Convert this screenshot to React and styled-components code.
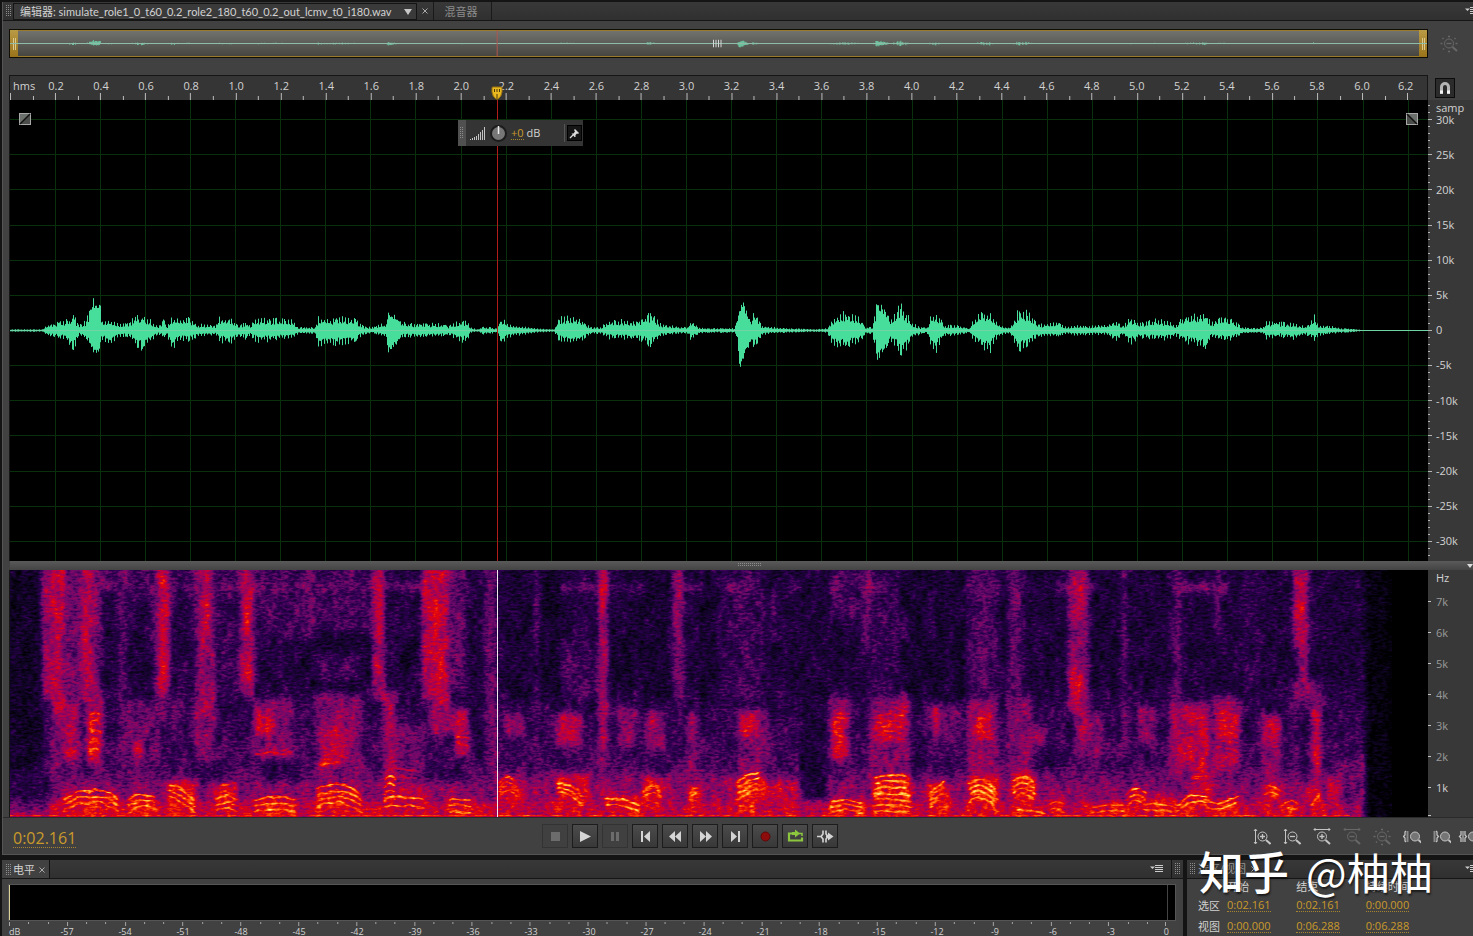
import React from 'react';
import styled, { createGlobalStyle } from 'styled-components';

const DURATION = 6.288;
const WIDTH = 1418;
const WAVE_HEIGHT = 461;
const CURSOR = 2.161;

const timeX = (t) => (t / DURATION) * WIDTH;

// [x, peak above the axis, peak below the axis]
const ENVELOPE = [
  [10, 1, 1], [42, 1, 1], [46, 5, 5], [58, 8, 7], [66, 10, 8], [69, 12, 18], [74, 17, 20], [76, 8, 10],
  [79, 5, 4], [86, 10, 10], [89, 20, 13], [93, 30, 20], [97, 28, 22], [100, 24, 15], [102, 9, 9], [109, 11, 17],
  [118, 7, 6], [130, 8, 6], [134, 15, 13], [141, 14, 19], [150, 10, 12], [153, 8, 8], [157, 4, 4], [163, 11, 6],
  [167, 4, 5], [172, 14, 20], [178, 12, 10], [189, 13, 11], [195, 6, 7], [207, 6, 5], [215, 4, 4], [219, 14, 11],
  [231, 12, 13], [236, 6, 6], [245, 7, 8], [250, 5, 5], [257, 13, 12], [283, 11, 8], [293, 10, 7], [298, 3, 3],
  [315, 3, 3], [318, 13, 16], [330, 12, 14], [352, 14, 13], [363, 4, 4], [373, 3, 2], [379, 6, 5], [385, 6, 6],
  [388, 18, 21], [394, 14, 15], [401, 8, 7], [415, 6, 6], [439, 7, 6], [448, 4, 4], [460, 10, 11], [467, 9, 11],
  [470, 3, 2], [477, 1, 1], [484, 4, 4], [495, 2, 2], [498, 5, 3], [502, 13, 17], [507, 6, 7], [524, 4, 4],
  [536, 2, 2], [554, 1, 1], [558, 13, 9], [569, 15, 13], [578, 14, 12], [590, 3, 3], [600, 3, 3], [609, 10, 8],
  [618, 11, 8], [635, 9, 9], [650, 17, 15], [661, 6, 5], [675, 4, 3], [687, 3, 3], [691, 11, 10], [698, 3, 3],
  [708, 2, 2], [722, 2, 2], [734, 2, 2], [737, 10, 8], [739, 24, 35], [743, 26, 29], [747, 18, 18], [750, 9, 14],
  [754, 20, 22], [757, 14, 12], [761, 5, 5], [768, 4, 3], [787, 2, 2], [815, 1, 1], [827, 2, 2], [832, 11, 14],
  [837, 15, 20], [842, 19, 18], [854, 14, 15], [859, 13, 13], [865, 3, 3], [872, 3, 3], [874, 14, 14], [877, 28, 28],
  [882, 22, 21], [889, 13, 12], [895, 18, 17], [900, 28, 23], [906, 17, 18], [912, 7, 8], [920, 3, 3], [927, 3, 3],
  [930, 13, 15], [935, 20, 23], [940, 13, 11], [943, 5, 5], [957, 5, 5], [969, 2, 2], [974, 13, 12], [983, 21, 18],
  [989, 18, 24], [995, 10, 9], [1002, 4, 4], [1010, 3, 3], [1014, 12, 13], [1018, 20, 23], [1030, 18, 15], [1033, 10, 8],
  [1040, 6, 6], [1057, 8, 6], [1066, 3, 3], [1076, 5, 5], [1090, 4, 4], [1097, 6, 4], [1107, 5, 4], [1115, 8, 10],
  [1123, 4, 4], [1130, 14, 14], [1138, 7, 7], [1157, 11, 9], [1168, 9, 9], [1175, 5, 5], [1183, 14, 10], [1199, 18, 18],
  [1208, 14, 16], [1211, 7, 6], [1218, 14, 9], [1232, 11, 9], [1242, 3, 3], [1256, 2, 2], [1263, 3, 3], [1266, 9, 9],
  [1277, 8, 5], [1292, 7, 9], [1306, 4, 4], [1314, 15, 11], [1318, 5, 5], [1332, 4, 3], [1341, 2, 2], [1356, 1, 1],
  [1366, 0, 0], [1428, 0, 0],
];

const noise = (n) => {
  const v = Math.sin(n * 127.1) * 43758.5453;
  return v - Math.floor(v);
};

const wavePath = (centre, scale, floor = 0) => {
  let d = '';
  let k = 0;
  for (let x = 10; x < 1428; x += 1) {
    while (k < ENVELOPE.length - 2 && ENVELOPE[k + 1][0] <= x) k += 1;
    const [x0, u0, d0] = ENVELOPE[k];
    const [x1, u1, d1] = ENVELOPE[k + 1];
    const f = (x - x0) / (x1 - x0);
    const loud = (x0 > 736 && x0 < 748) || (x0 > 86 && x0 < 100) || (x0 > 874 && x0 < 884) || (x0 > 386 && x0 < 395);
    const pulse = loud || x % 3 === 0 || noise(x + 7) > 0.8 ? 1 : 0.6;
    const up = ((u0 + (u1 - u0) * f) * pulse * (0.74 + 0.38 * noise(x)) - floor) * scale;
    const down = ((d0 + (d1 - d0) * f) * pulse * (0.74 + 0.38 * noise(x + 0.5)) - floor) * scale;
    if (up <= 0 && down <= 0) continue;
    d += `M${x - 9.5} ${(centre - up - 0.2).toFixed(1)}V${(centre + down + 0.2).toFixed(1)}`;
  }
  return d;
};

// energy of the spectrogram: [x0, x1, y0, y1, level]
const ENERGY = [
  [0, 1440, 560, 700, 0.19], [0, 1440, 690, 712, 0.225], [0, 1440, 712, 740, 0.255], [0, 1440, 740, 770, 0.28],
  [0, 1440, 770, 830, 0.34],
  [0, 42, 560, 770, 0.13], [0, 50, 770, 800, 0.22], [0, 50, 800, 830, 0.34],
  [42, 82, 560, 700, 0.36], [150, 260, 560, 700, 0.26], [100, 155, 560, 630, 0.29], [253, 372, 560, 640, 0.28],
  [640, 672, 570, 700, 0.16], [575, 598, 570, 700, 0.22], [720, 765, 570, 700, 0.25],
  [810, 828, 570, 790, 0.13], [828, 870, 570, 620, 0.29], [872, 900, 570, 700, 0.25], [900, 966, 570, 700, 0.16],
  [540, 560, 570, 700, 0.14], [316, 370, 630, 650, 0.16], [392, 422, 570, 690, 0.21], [470, 482, 570, 760, 0.2],
  [508, 534, 570, 700, 0.17], [700, 716, 570, 700, 0.16], [610, 640, 620, 690, 0.16], [316, 360, 655, 680, 0.27],
  [104, 118, 590, 625, 0.19], [135, 150, 600, 700, 0.18], [172, 192, 600, 690, 0.21], [262, 300, 640, 695, 0.2],
  [400, 420, 640, 670, 0.14], [450, 476, 660, 700, 0.19], [260, 310, 765, 785, 0.25], [190, 225, 765, 785, 0.26],
  [425, 470, 762, 790, 0.25], [910, 928, 735, 765, 0.2], [1040, 1068, 750, 770, 0.22], [1235, 1260, 725, 760, 0.26],
  [1088, 1120, 570, 690, 0.17], [1128, 1170, 570, 690, 0.18], [1325, 1366, 570, 690, 0.18],
  [50, 1366, 782, 830, 0.42], [62, 130, 583, 591, 0.4], [150, 360, 583, 591, 0.36], [370, 470, 583, 590, 0.42],
  [560, 580, 584, 591, 0.34], [580, 600, 584, 591, 0.4], [610, 645, 584, 591, 0.3], [670, 702, 584, 591, 0.38],
  [726, 752, 584, 591, 0.44], [790, 805, 583, 590, 0.36],
  [830, 845, 582, 591, 0.36], [863, 886, 582, 591, 0.4], [966, 1000, 582, 591, 0.4], [1060, 1098, 583, 591, 0.42],
  [1174, 1212, 583, 592, 0.4], [1214, 1230, 583, 592, 0.36],
  [42, 64, 560, 700, 0.48], [50, 63, 570, 620, 0.55], [50, 63, 660, 690, 0.54], [81, 100, 560, 700, 0.41],
  [82, 91, 560, 690, 0.53], [119, 127, 560, 760, 0.33], [156, 170, 560, 695, 0.45], [160, 168, 560, 688, 0.57],
  [195, 215, 560, 760, 0.42], [203, 212, 560, 635, 0.48], [203, 210, 700, 716, 0.57], [240, 254, 560, 695, 0.44],
  [243, 251, 575, 635, 0.55], [243, 252, 655, 684, 0.58], [307, 315, 560, 625, 0.39], [372, 385, 560, 700, 0.45],
  [376, 383, 560, 640, 0.55], [376, 382, 655, 670, 0.55], [422, 448, 560, 700, 0.52], [427, 444, 575, 650, 0.55],
  [433, 446, 650, 682, 0.56], [448, 466, 560, 690, 0.34], [484, 497, 560, 817, 0.34], [534, 540, 570, 760, 0.31],
  [560, 592, 640, 700, 0.28], [598, 608, 560, 770, 0.45], [600, 607, 575, 612, 0.55], [672, 684, 560, 700, 0.38],
  [674, 681, 575, 635, 0.46], [771, 775, 590, 645, 0.38], [740, 752, 560, 700, 0.29], [863, 871, 560, 655, 0.37],
  [902, 907, 610, 640, 0.4], [930, 934, 590, 640, 0.3], [967, 998, 560, 817, 0.3], [1008, 1022, 560, 817, 0.33],
  [1068, 1089, 560, 712, 0.42], [1072, 1084, 570, 630, 0.48], [1070, 1085, 674, 688, 0.57], [1072, 1081, 690, 712, 0.56],
  [1122, 1127, 560, 760, 0.37], [1172, 1181, 560, 700, 0.34], [1215, 1221, 560, 640, 0.35], [1240, 1262, 560, 690, 0.23],
  [1293, 1309, 560, 650, 0.47], [1297, 1306, 575, 640, 0.53], [1299, 1308, 650, 682, 0.5], [1290, 1325, 680, 710, 0.37],
  [52, 80, 700, 768, 0.4], [67, 77, 702, 745, 0.55], [52, 66, 700, 712, 0.57], [64, 77, 748, 756, 0.59],
  [86, 102, 695, 765, 0.53], [90, 98, 712, 756, 0.6], [118, 160, 700, 765, 0.35], [132, 143, 742, 755, 0.59],
  [160, 185, 700, 720, 0.38], [253, 296, 698, 758, 0.39], [255, 272, 708, 736, 0.57], [256, 290, 749, 756, 0.51],
  [316, 362, 695, 800, 0.42], [322, 346, 728, 766, 0.53], [318, 340, 761, 767, 0.57], [383, 396, 690, 800, 0.47],
  [396, 425, 725, 790, 0.37], [455, 470, 708, 757, 0.5], [436, 450, 694, 704, 0.55], [430, 455, 704, 735, 0.45],
  [503, 525, 715, 737, 0.43], [556, 582, 712, 745, 0.49], [560, 574, 718, 740, 0.56], [617, 636, 708, 748, 0.42],
  [646, 664, 710, 748, 0.43], [650, 655, 712, 726, 0.54], [687, 698, 715, 790, 0.43], [738, 768, 708, 790, 0.4],
  [740, 758, 712, 736, 0.56], [828, 850, 698, 762, 0.45], [833, 847, 714, 756, 0.57], [870, 910, 698, 800, 0.41],
  [876, 904, 712, 742, 0.54], [900, 908, 692, 712, 0.49], [925, 962, 705, 740, 0.37], [932, 940, 710, 735, 0.5],
  [968, 998, 700, 800, 0.44], [975, 992, 715, 738, 0.57], [1008, 1032, 698, 800, 0.41], [1018, 1046, 728, 745, 0.46],
  [1076, 1102, 712, 758, 0.43], [1075, 1086, 724, 733, 0.56], [1138, 1156, 706, 745, 0.42], [1170, 1210, 702, 775, 0.46],
  [1178, 1206, 714, 724, 0.55], [1176, 1208, 738, 764, 0.52], [1196, 1209, 720, 775, 0.54], [1213, 1240, 698, 775, 0.45],
  [1216, 1238, 714, 738, 0.57], [1216, 1238, 752, 762, 0.56], [1263, 1282, 714, 800, 0.43], [1265, 1278, 716, 744, 0.55],
  [1311, 1321, 710, 800, 0.45], [1314, 1320, 712, 770, 0.55], [1325, 1340, 775, 800, 0.5], [498, 812, 776, 800, 0.42],
  [50, 1345, 802, 830, 0.55], [0, 50, 811, 830, 0.5],
  [1340, 1368, 760, 806, 0.36], [1352, 1369, 803, 830, 0.44],
  [62, 118, 796, 817, 0.63], [127, 155, 796, 817, 0.62], [168, 196, 780, 817, 0.59], [215, 238, 786, 817, 0.59],
  [253, 296, 800, 817, 0.63], [316, 360, 790, 817, 0.61], [383, 424, 785, 817, 0.54], [448, 470, 800, 817, 0.61],
  [498, 528, 782, 802, 0.6], [556, 590, 775, 817, 0.6], [605, 662, 795, 817, 0.61], [643, 664, 778, 800, 0.6],
  [688, 705, 785, 817, 0.59], [735, 765, 778, 817, 0.64], [765, 800, 782, 817, 0.53], [828, 864, 800, 817, 0.63],
  [872, 912, 776, 817, 0.61], [928, 950, 782, 817, 0.61], [968, 1000, 774, 817, 0.62], [1012, 1036, 773, 817, 0.62],
  [1050, 1064, 800, 817, 0.6], [1088, 1130, 805, 817, 0.61], [1130, 1175, 792, 817, 0.58], [1178, 1240, 800, 817, 0.63],
  [1192, 1212, 768, 800, 0.53], [1262, 1284, 785, 800, 0.61], [1310, 1322, 788, 817, 0.6], [1278, 1300, 805, 817, 0.61],
  [800, 826, 560, 800, 0.18], [1366, 1440, 560, 830, 0.05], [1388, 1440, 560, 830, 0],
];

// [x0, x1, y of the lowest start, y of its end, bend, lines, gap, brightness]
const HARMONICS = [
  [63, 92, 812, 803, 3, 3, 6, 0.88], [88, 119, 804, 813, 6, 3, 6, 0.9], [128, 155, 812, 810, 5, 3, 6, 0.88],
  [169, 194, 796, 813, 3, 3, 6, 0.88], [216, 238, 812, 812, 4, 3, 6, 0.88], [220, 236, 786, 783, 1, 1, 6, 0.74],
  [254, 296, 812, 811, 2, 3, 6, 0.86], [317, 362, 808, 813, 8, 4, 6, 0.88], [384, 424, 806, 808, 2, 2, 8, 0.86],
  [384, 396, 802, 800, 4, 4, 7, 0.92], [396, 420, 790, 794, 1, 4, 7, 0.56], [449, 471, 812, 812, 0, 3, 6, 0.86],
  [499, 516, 798, 796, 5, 4, 5, 0.84], [557, 583, 794, 806, 5, 3, 5, 0.9], [606, 640, 806, 812, 4, 2, 6, 0.93],
  [642, 662, 800, 798, 7, 2, 6, 0.86], [689, 698, 800, 793, 2, 2, 5, 0.88], [737, 759, 800, 790, 2, 4, 6, 0.93],
  [738, 756, 812, 811, 0, 2, 5, 0.82], [829, 862, 813, 813, 3, 3, 5, 0.9], [873, 912, 812, 814, 2, 4, 6, 0.84],
  [874, 906, 796, 794, 2, 4, 6, 0.92], [929, 945, 808, 793, 2, 3, 6, 0.92], [969, 997, 802, 812, 9, 4, 6, 0.92],
  [1013, 1034, 799, 800, 5, 4, 6, 0.92], [1018, 1045, 811, 814, 2, 1, 6, 0.86], [1051, 1063, 812, 813, 5, 2, 6, 0.8],
  [1092, 1124, 813, 811, 1, 2, 6, 0.82], [1126, 1146, 807, 806, 6, 3, 6, 0.84], [1145, 1172, 811, 813, 2, 2, 6, 0.84],
  [1177, 1206, 812, 804, 7, 2, 6, 0.93], [1204, 1238, 806, 802, -4, 2, 6, 0.9], [1192, 1208, 776, 774, -2, 1, 6, 0.74],
  [1263, 1280, 796, 796, 3, 2, 6, 0.82], [1282, 1298, 813, 812, 5, 2, 6, 0.84], [1312, 1320, 806, 794, 0, 1, 6, 0.92],
  [90, 100, 752, 752, 4, 5, 9, 0.8], [834, 846, 738, 738, 1, 5, 5, 0.66], [878, 902, 740, 740, 2, 5, 6, 0.66],
  [976, 990, 738, 738, 1, 4, 6, 0.68], [1180, 1208, 760, 764, 2, 7, 7, 0.6], [1216, 1238, 756, 758, 2, 7, 7, 0.62],
  [318, 340, 766, 762, 1, 1, 5, 0.76], [256, 292, 753, 753, 0, 1, 6, 0.62], [456, 468, 753, 753, 0, 3, 8, 0.64],
];

const LINES = HARMONICS.flatMap(([x0, x1, y0, y1, bend, lines, gap, level]) =>
  Array.from({ length: lines }, (_, i) => ({
    d: `M${x0} ${y0 - i * gap}Q${(x0 + x1) / 2} ${(y0 + y1) / 2 - bend * 2 - i * gap} ${x1} ${y1 - i * gap}`,
    level: level * 0.93,
  }))
);

const grey = (level) => {
  const v = Math.round(level * 255);
  return `rgb(${v},${v},${v})`;
};

const WaveDrawing = () => {
  const rows = [30, 25, 20, 15, 10, 5, -5, -10, -15, -20, -25, -30];
  const cols = Array.from({ length: 31 }, (_, i) => (i + 1) * 0.2);
  return (
    <Drawing viewBox={`0 0 ${WIDTH} ${WAVE_HEIGHT}`} preserveAspectRatio="none" aria-hidden="true">
      <g stroke="#09300c" strokeWidth="1" shapeRendering="crispEdges">
        {rows.map((r) => (
          <line key={r} x1="0" x2={WIDTH} y1={230.5 - r * 7.026} y2={230.5 - r * 7.026} />
        ))}
        {cols.map((t) => (
          <line key={t} x1={timeX(t)} x2={timeX(t)} y1="0" y2={WAVE_HEIGHT} />
        ))}
      </g>
      <path d={wavePath(230.5, 1)} stroke="#47dd9b" strokeWidth="1" />
      <path d={`M0 230.5H${WIDTH}`} stroke="#6fd3a6" strokeWidth="1" />
      <path d={`M${Math.round(timeX(CURSOR)) + 0.5} 0V${WAVE_HEIGHT}`} stroke="#b01c18" shapeRendering="crispEdges" />
    </Drawing>
  );
};

const SpectrumDrawing = () => (
  <Drawing viewBox="10 570 1418 247" preserveAspectRatio="none" aria-hidden="true">
    <defs>
      <filter id="soften" filterUnits="userSpaceOnUse" x="0" y="550" width="1440" height="290" colorInterpolationFilters="sRGB">
        <feGaussianBlur stdDeviation="2.5 3" />
      </filter>
      <filter id="line" filterUnits="userSpaceOnUse" x="0" y="550" width="1440" height="290" colorInterpolationFilters="sRGB">
        <feTurbulence type="fractalNoise" baseFrequency="0.08 0.08" numOctaves="2" seed="2" result="warp" />
        <feDisplacementMap in="SourceGraphic" in2="warp" scale="5" xChannelSelector="R" yChannelSelector="G" />
        <feGaussianBlur stdDeviation="0.9 0.4" />
      </filter>
      <filter id="heat" filterUnits="userSpaceOnUse" x="10" y="570" width="1418" height="247" colorInterpolationFilters="sRGB">
        <feTurbulence type="fractalNoise" baseFrequency="0.18 0.46" numOctaves="2" seed="4" />
        <feColorMatrix values="1 0 0 0 0  1 0 0 0 0  1 0 0 0 0  0 0 0 0 1" result="grain" />
        <feTurbulence type="fractalNoise" baseFrequency="0.09 0.05" numOctaves="3" seed="9" />
        <feColorMatrix values="1 0 0 0 0  1 0 0 0 0  1 0 0 0 0  0 0 0 0 1" result="cloud" />
        <feComposite in="SourceGraphic" in2="grain" operator="arithmetic" k1="0.1" k2="0.95" k3="0.34" k4="-0.17" result="fine" />
        <feComposite in="fine" in2="cloud" operator="arithmetic" k1="0.3" k2="0.85" k3="0.14" k4="-0.07" />
        <feComponentTransfer>
          <feFuncR type="table" tableValues="0 0.06 0.18 0.44 0.68 0.88 1 1 1" />
          <feFuncG type="table" tableValues="0 0.02 0 0.04 0 0 0.28 0.66 0.92" />
          <feFuncB type="table" tableValues="0 0.14 0.32 0.42 0.32 0.06 0 0.15 0.5" />
        </feComponentTransfer>
      </filter>
    </defs>
    <g filter="url(#heat)">
      <g filter="url(#soften)">
        {ENERGY.map(([x0, x1, y0, y1, level], i) => (
          <rect key={i} x={x0} y={y0} width={x1 - x0} height={y1 - y0} fill={grey(level)} />
        ))}
      </g>
      <g filter="url(#line)" fill="none" strokeWidth="2">
        {LINES.map(({ d, level }, i) => (
          <path key={i} d={d} stroke={grey(level)} />
        ))}
      </g>
      <path d="M10 815.5H1350" stroke={grey(0.68)} strokeWidth="1" />
    </g>
    <path d="M1392 570h36v247h-36z" fill="#000" />
    <path d="M497.5 570V817" stroke="#f4e6ea" strokeWidth="1" />
  </Drawing>
);

const Grip = ({ w = 6, h = 12 }) => (
  <svg width={w} height={h} aria-hidden="true">
    {Array.from({ length: Math.floor(h / 2) }, (_, j) =>
      Array.from({ length: Math.floor(w / 2) }, (_, i) => (
        <rect key={`${i}-${j}`} x={i * 2} y={j * 2} width="1" height="1" fill="#8c8c8c" />
      ))
    )}
  </svg>
);

const MenuGlyph = () => (
  <svg width="14" height="10" viewBox="0 0 14 10" aria-hidden="true">
    <path d="M0 2.5h5L2.5 5z" fill="#ccc" />
    <path d="M5 1.5h8M5 3.5h8M5 5.5h8M5 7.5h8" stroke="#ccc" strokeWidth="1" />
  </svg>
);

const Cross = () => (
  <svg width="6" height="6" viewBox="0 0 6 6" aria-hidden="true">
    <path d="M.5.5l5 5M5.5.5l-5 5" stroke="#aaa" strokeWidth="1" />
  </svg>
);

const TRANSPORT = [
  { name: 'Stop', off: true, icon: <rect x="4" y="4" width="9" height="9" fill="#6c6c6c" /> },
  { name: 'Play', icon: <path d="M3 3l11 5.5L3 14z" fill="#d5d5d5" /> },
  { name: 'Pause', off: true, icon: <path d="M4 4h3v9H4zM9 4h3v9H9z" fill="#6c6c6c" /> },
  { name: 'Previous', icon: <path d="M4 3h2v11H4zM13 3v11L7 8.5z" fill="#d5d5d5" /> },
  { name: 'Rewind', icon: <path d="M8 3v11L2 8.5zM14 3v11L8 8.5z" fill="#d5d5d5" /> },
  { name: 'Fast forward', icon: <path d="M3 3l6 5.5L3 14zM9 3l6 5.5L9 14z" fill="#d5d5d5" /> },
  { name: 'Next', icon: <path d="M4 3l6 5.5L4 14zM11 3h2v11h-2z" fill="#d5d5d5" /> },
  { name: 'Record', icon: <circle cx="8.500" cy="8.500" r="4.500" fill="#8d0c0c" stroke="#5d0808" /> },
  {
    name: 'Loop playback',
    icon: (
      <>
        <path d="M5 5.500H2v7h13V9.500" fill="none" stroke="#8cc63f" strokeWidth="2.200" />
        <path d="M8 1.500l5 4-5 4V7H5V4h3z" fill="#8cc63f" />
        <path d="M12 5.500h3V8" fill="none" stroke="#8cc63f" strokeWidth="1.500" />
      </>
    ),
  },
  {
    name: 'Skip selection',
    icon: (
      <>
        <path d="M0 8.500h4M6 2.500v3.500L4 8.500 6 11v3.500M9 2.500v3.500l2 2.500L9 11v3.500" fill="none" stroke="#d5d5d5" strokeWidth="1.600" />
        <path d="M11 4.500l5.500 4-5.500 4v-3H9v-2h2z" fill="#d5d5d5" />
      </>
    ),
  },
];

const Lens = ({ sign, x = 9, y = 8.5, fill = 'none' }) => (
  <g>
    <circle cx={x} cy={y} r="4.500" fill={fill} />
    <path d={`M${x + 3.5} ${y + 3.5}L${x + 8} ${y + 7.5}`} strokeWidth="2" />
    {sign && <path d={`M${x - 2.5} ${y}h5${sign === '+' ? `M${x} ${y - 2.5}v5` : ''}`} strokeWidth="1.300" />}
  </g>
);

const upright = <path d="M2.500 1.500v14M1 3l1.500-2L4 3M1 14l1.500 2L4 14" />;
const across = <path d="M1 1.500h16M2.500 0L1 1.500 2.500 3M15.500 0L17 1.500 15.500 3" />;
const arrows = <path d="M8 1.500h2M8 16.500h2M.5 8.500h2M15.500 8.500h2M2.500 3l1 1M14.500 4l1-1M3 14.500l1-1" strokeWidth="1.500" />;
const braceIn = (
  <g>
    <path d="M3 3L2 4v3L.5 8.500 2 10v3l1 1" strokeWidth="1.300" />
    <path d="M4.500 3v11" stroke="#8a8a8a" strokeWidth="2" />
  </g>
);
const braceOut = (
  <g>
    <path d="M3 3l1 1v3l1.500 1.500L4 10v3l-1 1" strokeWidth="1.300" />
    <path d="M1.500 3v11" stroke="#8a8a8a" strokeWidth="2" />
  </g>
);

const ZOOMS = [
  { name: 'Zoom in amplitude', icon: <>{upright}<Lens sign="+" x={9.5} /></> },
  { name: 'Zoom out amplitude', icon: <>{upright}<Lens sign="-" x={9.5} /></> },
  { name: 'Zoom in time', icon: <>{across}<Lens sign="+" /></> },
  { name: 'Zoom out time', off: true, icon: <>{across}<Lens sign="-" /></> },
  { name: 'Zoom out full', off: true, icon: <>{arrows}<Lens sign="-" /></> },
  { name: 'Zoom to in point', icon: <>{braceIn}<Lens x={12} fill="#757575" /></> },
  { name: 'Zoom to out point', icon: <>{braceOut}<Lens x={12} fill="#757575" /></> },
  {
    name: 'Zoom to selection',
    icon: (
      <>
        <path d="M3 3v4L1.500 8.500 3 10v4M7 3v4l1.500 1.500L7 10v4" strokeWidth="1.300" />
        <path d="M5 3v11" stroke="#8a8a8a" strokeWidth="2" />
        <Lens x={15} fill="#757575" />
      </>
    ),
  },
];

const RANGES = [
  { label: '选区', values: ['0:02.161', '0:02.161', '0:00.000'] },
  { label: '视图', values: ['0:00.000', '0:06.288', '0:06.288'] },
];

const App = () => {
  const times = Array.from({ length: 31 }, (_, i) => ((i + 1) * 0.2).toFixed(1));
  const samples = ['30k', '25k', '20k', '15k', '10k', '5k', '0', '-5k', '-10k', '-15k', '-20k', '-25k', '-30k'];
  const decibels = Array.from({ length: 19 }, (_, i) => -57 + i * 3);

  return (
    <>
      <GlobalStyle />
      <Screen>
        <Editor>
          <TabBar>
            <Grip w={6} h={12} />
            <FileButton type="button">
              <span>编辑器: simulate_role1_0_t60_0.2_role2_180_t60_0.2_out_lcmv_t0_i180.wav</span>
              <svg width="8" height="6" viewBox="0 0 8 6" aria-hidden="true">
                <path d="M0 0h8L4 6z" fill="#c8c8c8" />
              </svg>
            </FileButton>
            <CloseButton type="button" aria-label="Close file"><Cross /></CloseButton>
            <MixerTab type="button">混音器</MixerTab>
            <MenuButton type="button" aria-label="Panel menu" $clipped><MenuGlyph /></MenuButton>
          </TabBar>

          <OverviewRow>
            <Overview>
              <Handle><i /></Handle>
              <Drawing viewBox="0 0 1418 25" preserveAspectRatio="none" aria-hidden="true">
                <path d={wavePath(12.5, 0.13, 9)} stroke="#6dc09c" strokeWidth="1" />
                <path d="M0 12.500H1418" stroke="#8dbda8" />
                <path d="M487.500 0V25" stroke="#b0564f" />
                <path d="M704 9v7M706.500 9v7M709 9v7M711.500 9v7" stroke="#d8d8d8" />
              </Drawing>
              <Handle><i /></Handle>
            </Overview>
            <Side>
              <IconButton type="button" aria-label="Zoom out full" $off>
                <svg width="18" height="18" viewBox="0 0 18 18">{arrows}<Lens sign="-" /></svg>
              </IconButton>
            </Side>
          </OverviewRow>

          <Row>
            <Ruler>
              <Drawing viewBox="0 0 1418 24" preserveAspectRatio="none" aria-hidden="true">
                {Array.from({ length: 63 }, (_, i) => (
                  <path key={i} d={`M${Math.round(timeX(i * 0.1)) + 0.5} ${i % 2 ? 20 : 17}V24`} stroke="#bdbdbd" />
                ))}
              </Drawing>
              <RulerLabels>
                <Unit>hms</Unit>
                {times.map((t) => <li key={t}>{t}</li>)}
              </RulerLabels>
              <Marker style={{ left: `${(CURSOR / DURATION) * 100}%` }}>
                <svg width="12" height="14" viewBox="0 0 12 14" aria-hidden="true">
                  <path d="M1 2Q1 1 2 1h8q1 0 1 1v4q0 4-5 8Q1 10 1 6z" fill="#e9b820" stroke="#9a7410" />
                  <path d="M3.500 3v3M6 3v3M8.500 3v3M6 8v6" stroke="#4b390a" />
                </svg>
              </Marker>
            </Ruler>
            <Side>
              <SnapButton type="button" aria-label="Snapping">
                <svg width="12" height="12" viewBox="0 0 12 12">
                  <path d="M2.500 12V5a3.500 3.500 0 017 0v7" fill="none" stroke="#b5b5b5" strokeWidth="3" />
                  <path d="M1 10h3M8 10h3" stroke="#f4f4f4" strokeWidth="3" />
                </svg>
              </SnapButton>
            </Side>
          </Row>

          <WaveRow>
            <Canvas>
              <WaveDrawing />
              <Fade>
                <svg width="12" height="12"><rect x=".5" y=".5" width="11" height="11" fill="#6c706c" stroke="#a8a8a8" /><path d="M1 11L11 1v10z" fill="#4a4d4a" /><path d="M1 11L11 1" stroke="#111" strokeWidth="1.500" /></svg>
              </Fade>
              <Fade $end>
                <svg width="12" height="12"><rect x=".5" y=".5" width="11" height="11" fill="#6c706c" stroke="#a8a8a8" /><path d="M1 1l10 10H1z" fill="#4a4d4a" /><path d="M1 1l10 10" stroke="#111" strokeWidth="1.500" /></svg>
              </Fade>
              <Hud>
                <HudGrip><Grip w={5} h={12} /></HudGrip>
                <svg width="16" height="13" viewBox="0 0 16 13" aria-hidden="true">
                  <path d="M.5 13v-1M2.500 13v-2M4.500 13v-3M6.500 13v-4M8.500 13V7M10.500 13V5M12.500 13V3M14.500 13V0" stroke="#c4c4c4" />
                </svg>
                <svg width="17" height="17" viewBox="0 0 17 17" aria-hidden="true">
                  <circle cx="8.500" cy="8.500" r="7.500" fill="#777" stroke="#1c1c1c" strokeWidth="2" />
                  <path d="M8.500 1v8" stroke="#eee" strokeWidth="1.500" />
                </svg>
                <Gain><HotText type="button">+0</HotText> dB</Gain>
                <PinSlot>
                  <PinButton type="button" aria-label="Pin">
                    <svg width="11" height="11" viewBox="0 0 11 11">
                      <path d="M6 1l4 4-1 1-1-.5L6.500 7v2L5.500 9 2.500 5.500h2L6 3.500 5 2z" fill="#ddd" />
                      <path d="M4 7L1 10" stroke="#ddd" strokeWidth="1.200" />
                    </svg>
                  </PinButton>
                </PinSlot>
              </Hud>
            </Canvas>
            <Scale>
              <Drawing viewBox="0 0 45 461" preserveAspectRatio="none" aria-hidden="true">
                {Array.from({ length: 65 }, (_, i) => i - 32).map((k) => (
                  <path key={k} d={`M0 ${Math.round(230 - k * 7.026) + 0.5}h${k % 5 ? 2 : 4}`} stroke="#b5b5b5" />
                ))}
              </Drawing>
              <ScaleLabels>
                <Samp>samp</Samp>
                {samples.map((s) => <li key={s}>{s}</li>)}
                <Rest />
              </ScaleLabels>
            </Scale>
          </WaveRow>

          <Divider>
            <Grip w={24} h={5} />
            <svg width="6" height="4" viewBox="0 0 6 4" aria-hidden="true"><path d="M0 0h6L3 4z" fill="#ddd" /></svg>
          </Divider>

          <SpectrumRow>
            <Canvas><SpectrumDrawing /></Canvas>
            <Scale>
              <Drawing viewBox="0 0 45 247" preserveAspectRatio="none" aria-hidden="true">
                {[31, 62, 93, 124, 155, 186, 217, 245].map((y) => (
                  <path key={y} d={`M0 ${y + 0.5}h3`} stroke="#c5c5c5" />
                ))}
              </Drawing>
              <HertzLabels>
                <Hertz>Hz</Hertz>
                {[7, 6, 5, 4, 3, 2, 1].map((k) => <li key={k}>{k}k</li>)}
              </HertzLabels>
            </Scale>
          </SpectrumRow>

          <Controls>
            <div><TimeButton type="button">0:02.161</TimeButton></div>
            <Transport>
              {TRANSPORT.map(({ name, off, icon }) => (
                <TransportButton key={name} type="button" aria-label={name} disabled={off}>
                  <svg width="17" height="17" viewBox="0 0 17 17">{icon}</svg>
                </TransportButton>
              ))}
            </Transport>
            <Zooms>
              {ZOOMS.map(({ name, off, icon }) => (
                <IconButton key={name} type="button" aria-label={name} $off={off}>
                  <svg width="18" height="18" viewBox="0 0 18 18">{icon}</svg>
                </IconButton>
              ))}
            </Zooms>
          </Controls>
        </Editor>

        <Lower>
          <Levels>
            <TabBar>
              <LevelTab>
                <Grip w={6} h={12} />
                <span>电平</span>
                <CloseButton type="button" aria-label="Close levels"><Cross /></CloseButton>
              </LevelTab>
              <MenuButton type="button" aria-label="Levels menu"><MenuGlyph /></MenuButton>
              <BarGrip><Grip w={6} h={12} /></BarGrip>
            </TabBar>
            <Meter />
            <MeterScale>
              <MeterTicks>
                <Drawing viewBox="0 0 1156 5" preserveAspectRatio="none" aria-hidden="true">
                  {Array.from({ length: 61 }, (_, i) => (
                    <path key={i} d={`M${Math.min(Math.round(i * 19.27), 1155) + 0.5} 1v${i % 3 ? 2 : 4}`} stroke="#a5a5a5" />
                  ))}
                </Drawing>
              </MeterTicks>
              <MeterLabels>
                <li>dB</li>
                {decibels.map((d) => <li key={d}>{d}</li>)}
                <li>0</li>
              </MeterLabels>
            </MeterScale>
          </Levels>

          <Ranges>
            <TabBar>
              <Grip w={6} h={12} />
              <RangeTitle>选区/视图</RangeTitle>
              <CloseButton type="button" aria-label="Close selection"><Cross /></CloseButton>
              <MenuButton type="button" aria-label="Selection menu" $clipped><MenuGlyph /></MenuButton>
            </TabBar>
            <RangeTable>
              <thead>
                <tr>
                  <td />
                  <th scope="col">开始</th>
                  <th scope="col">结束</th>
                  <th scope="col">持续时间</th>
                </tr>
              </thead>
              <tbody>
                {RANGES.map(({ label, values }) => (
                  <tr key={label}>
                    <th scope="row">{label}</th>
                    {values.map((v, i) => (
                      <td key={i}><HotText type="button">{v}</HotText></td>
                    ))}
                  </tr>
                ))}
              </tbody>
            </RangeTable>
            <Watermark><b>知乎</b><span>@柚柚</span></Watermark>
          </Ranges>
        </Lower>
      </Screen>
    </>
  );
};

const GlobalStyle = createGlobalStyle`
  * {
    box-sizing: border-box;
  }

  body {
    margin: 0;
    background: #141414;
    color: #d2d2d2;
    font-family: 'Open Sans', 'Noto Sans CJK SC', sans-serif;
    font-size: 11px;
    line-height: 12px;
    overflow: hidden;
  }

  ul {
    list-style: none;
    margin: 0;
    padding: 0;
  }

  button {
    font: inherit;
    color: inherit;
    background: none;
    border: 0;
    padding: 0;
  }

  svg {
    display: block;
    flex-shrink: 0;
  }
`;

const Drawing = styled.svg`
  position: absolute;
  inset: 0;
  width: 100%;
  height: 100%;
`;

const Screen = styled.main`
  display: flex;
  flex-direction: column;
  min-height: 100vh;
  padding: 2px 0 0 2px;
`;

const Editor = styled.section`
  flex: 1;
  display: flex;
  flex-direction: column;
  background: #414141;
  border-left: 1px solid #555;
`;

const TabBar = styled.header`
  display: flex;
  align-items: center;
  height: 19px;
  padding-left: 3px;
  background: linear-gradient(#383838, #303030);
  border-bottom: 1px solid #161616;
  overflow: hidden;
`;

const FileButton = styled.button`
  display: flex;
  align-items: center;
  gap: 12px;
  height: 17px;
  margin-left: 1px;
  padding: 1px 4px 0 6px;
  background: #3a3a3a;
  border: 1px solid #151515;
  font-family: Lato, 'Noto Sans CJK SC', sans-serif;
  white-space: nowrap;
`;

const CloseButton = styled.button`
  padding: 0 5px;
`;

const MixerTab = styled.button`
  height: 19px;
  padding: 1px 13px 0 11px;
  color: #8c8c8c;
  border: 1px solid #1a1a1a;
  border-width: 0 1px;
`;

const MenuButton = styled.button`
  margin-left: auto;
  margin-right: ${({ $clipped }) => ($clipped ? '-6px' : '7px')};
`;

const Row = styled.div`
  display: grid;
  grid-template-columns: 1fr 45px;
  height: 25px;
  padding-left: 6px;
`;

const OverviewRow = styled(Row)`
  height: 29px;
  margin: 8px 0 17px;
`;

const Side = styled.div`
  padding-left: 7px;
  display: flex;
  align-items: center;
`;

const Overview = styled.div`
  position: relative;
  display: flex;
  justify-content: space-between;
  background: linear-gradient(#737370, #5c5c58 50%, #45433d);
  border: 1px solid #a8842c;
  outline: 1px solid #100d05;
  outline-offset: -1px;
  box-shadow: inset 0 0 0 1px #9a7a2b;
`;

const Handle = styled.div`
  display: grid;
  place-items: center;
  width: 8px;
  background: linear-gradient(#b99a45, #9a741b);

  i {
    width: 3px;
    height: 12px;
    border: 1px solid #dcc98d;
    border-width: 0 1px;
  }
`;

const Ruler = styled.div`
  position: relative;
  background: #353535;
  border: 1px solid #161616;
  border-bottom: 0;
`;

const RulerLabels = styled.ul`
  position: relative;
  display: flex;
  padding-top: 4px;
  padding-left: 1px;

  li {
    flex: 200 1 0;
    min-width: 0;
    text-align: center;
  }

  li:last-child {
    flex-grow: 188;
  }

  li:first-child {
    flex-grow: 100;
  }
`;

const Unit = styled.li`
  display: flex;
  text-indent: 2px;
`;

const Marker = styled.div`
  position: absolute;
  bottom: 0;
  margin-left: -6px;
`;

const SnapButton = styled.button`
  display: grid;
  place-items: center;
  width: 20px;
  height: 20px;
  background: #2b2b2b;
  border: 1px solid #0c0c0c;
`;

const WaveRow = styled(Row)`
  flex: 1 0 461px;
  height: auto;
`;

const Canvas = styled.div`
  position: relative;
  background: #000;
  border-left: 1px solid #161616;
  overflow: hidden;
`;

const Fade = styled.div`
  position: absolute;
  top: 13px;
  ${({ $end }) => ($end ? 'right: 10px;' : 'left: 9px;')}
`;

const Hud = styled.div`
  position: absolute;
  top: 20px;
  left: 448px;
  display: flex;
  align-items: center;
  gap: 4px;
  width: 125px;
  height: 26px;
  background: #343434;
`;

const HudGrip = styled.div`
  display: grid;
  place-items: center;
  align-self: stretch;
  width: 8px;
  background: #505050;
`;

const HotText = styled.button`
  color: #c99a2b;
  line-height: 12px;
  border-bottom: 1px dotted #a8842c;
`;

const Gain = styled.span`
  white-space: nowrap;
`;

const PinSlot = styled.div`
  margin: 0 2px 0 auto;
  padding-left: 3px;
  border-left: 1px solid #555;
`;

const PinButton = styled.button`
  display: grid;
  place-items: center;
  width: 13px;
  height: 14px;
  margin: 2px 0;
  background: #161616;
  outline: 1px solid #000;
`;

const Scale = styled.div`
  position: relative;
  background: #383838;
  overflow: hidden;
`;

const ScaleLabels = styled.ul`
  position: relative;
  display: flex;
  flex-direction: column;
  height: 100%;
  padding-left: 8px;

  li {
    flex: 5000 1 0;
    min-height: 0;
    display: flex;
    align-items: center;
  }
`;

const Samp = styled.span`
  flex: 280 1 0;
  min-height: 0;
  line-height: 16px;
`;

const Rest = styled.span`
  flex: 340 1 0;
`;

const Divider = styled.div`
  display: grid;
  grid-template-columns: 1fr 6px;
  align-items: center;
  justify-items: center;
  height: 9px;
  margin-left: 7px;
  padding-left: 22px;
  background: linear-gradient(#5a5a5a, #444);
`;

const SpectrumRow = styled(Row)`
  height: 247px;
`;

const HertzLabels = styled.ul`
  position: relative;
  padding-left: 8px;

  li {
    display: flex;
    align-items: center;
    height: 31px;
    color: #9a9a9a;
  }

  li:last-child {
    color: #d2d2d2;
  }
`;

const Hertz = styled.div`
  height: 16px;
  padding-top: 2px;
`;

const Controls = styled.div`
  display: grid;
  grid-template-columns: 532fr auto 635fr;
  align-items: center;
  height: 38px;
  padding-left: 7px;
  border-top: 1px solid #2a2a2a;
  border-bottom: 1px solid #545454;
`;

const TimeButton = styled(HotText)`
  margin: 4px 0 0 3px;
  font-size: 16px;
  line-height: 18px;
`;

const Transport = styled.div`
  display: flex;
  gap: 4px;
`;

const TransportButton = styled.button`
  display: grid;
  place-items: center;
  width: 26px;
  height: 24px;
  background: linear-gradient(#4b4b4b, #383838);
  border: 1px solid #1c1c1c;

  &:disabled {
    background: #404040;
    border-color: #333;
  }
`;

const IconButton = styled.button`
  width: 30px;
  margin-left: -1px;
  stroke: ${({ $off }) => ($off ? '#686868' : '#c4c4c4')};
  fill: none;

  svg {
    margin: 0 auto;
  }
`;

const Zooms = styled.div`
  display: flex;
  justify-content: flex-end;
  padding-top: 2px;
  overflow: hidden;

  ${IconButton} {
    flex-shrink: 0;
    margin: 0;
  }

  ${IconButton}:last-child {
    width: 16px;
    overflow: hidden;

    svg {
      margin: 0 0 0 1px;
    }
  }
`;

const Lower = styled.div`
  display: grid;
  grid-template-columns: 1fr 286px;
  gap: 4px;
  height: 76px;
  margin-top: 5px;
`;

const Panel = styled.section`
  position: relative;
  background: #414141;
`;

const Levels = styled(Panel)`
  overflow: hidden;

  > ${TabBar} {
    padding-left: 0;
  }
`;

const LevelTab = styled.div`
  display: flex;
  align-items: center;
  gap: 1px;
  height: 19px;
  padding: 1px 0 0 4px;
  background: #414141;
  border-right: 1px solid #111;
  white-space: nowrap;

  ${CloseButton} {
    padding: 0 4px 0 3px;
  }
`;

const BarGrip = styled.div`
  display: grid;
  place-items: center;
  align-self: stretch;
  width: 12px;
  border-left: 1px solid #151515;
`;

const Meter = styled.div`
  height: 37px;
  margin: 5px 7px 0 6px;
  background: linear-gradient(90deg, transparent 1158px, #444 1158px, #444 1159px, transparent 1159px) #000;
  border: 1px solid #555;
  box-shadow: inset 1px 0 0 #d9d294;
`;

const MeterScale = styled.div`
  padding: 0 17px 0 7px;
`;

const MeterTicks = styled.div`
  position: relative;
  height: 5px;
`;

const MeterLabels = styled.ul`
  display: flex;
  font-size: 9px;
  line-height: 12px;

  li {
    flex: 2 1 0;
    min-width: 0;
    text-align: center;
  }

  li:first-child {
    flex-grow: 1;
    text-align: left;
  }

  li:last-child {
    flex-grow: 1;
    text-align: right;
    margin-right: -3px;
  }
`;

const Ranges = styled(Panel)``;

const RangeTitle = styled.span`
  padding-left: 2px;
  color: #9a9a9a;
`;

const RangeTable = styled.table`
  width: 237px;
  margin-left: 11px;
  border-collapse: collapse;
  table-layout: fixed;

  th,
  td {
    height: 21px;
    padding: 0;
    font-weight: 400;
    text-align: left;
    white-space: nowrap;
  }

  thead td {
    width: 29px;
  }

  thead th,
  thead td {
    height: 16px;
  }
`;

const Watermark = styled.div`
  position: absolute;
  top: -18px;
  left: 12px;
  display: flex;
  gap: 17px;
  color: #fff;
  font-size: 43px;
  line-height: 58px;
  white-space: nowrap;
  text-shadow: 1px 2px 2px rgba(0, 0, 0, 0.6);
  font-family: 'Noto Sans CJK SC', sans-serif;
  pointer-events: none;

  b {
    font-size: 45px;
    font-weight: 500;
  }
`;

export default App;
